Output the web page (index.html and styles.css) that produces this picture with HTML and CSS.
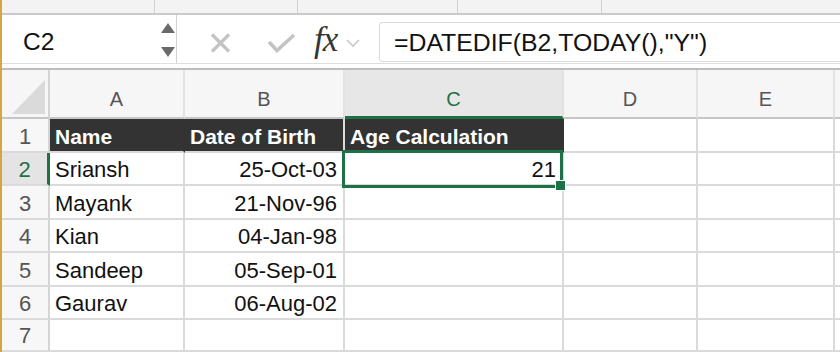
FILE: index.html
```html
<!DOCTYPE html>
<html>
  <head>
    <meta charset="utf-8">
    <title>Age Calculation</title>
    <link rel="stylesheet" href="styles.css">
  </head>
  <body>
    <div class="window">
      <div class="ribbon-edge">
        <span class="seg seg-1"></span>
        <span class="seg seg-2"></span>
        <span class="seg seg-3"></span>
        <span class="seg seg-4"></span>
      </div>

      <div class="formula-bar">
        <div class="name-box">
          <span class="ref">C2</span>
          <svg class="spinner" width="14" height="34" viewBox="0 0 14 34">
            <path d="M7 0 L14 10 L0 10 Z" fill="#6b6b6b"/>
            <path d="M0 24 L14 24 L7 34 Z" fill="#6b6b6b"/>
          </svg>
        </div>
        <div class="tools">
          <svg class="icon-cancel" width="23" height="20" viewBox="0 0 23 20">
            <path d="M3 1.5 L20 18.5 M20 1.5 L3 18.5" stroke="#c3c3c3" stroke-width="3.2" fill="none"/>
          </svg>
          <svg class="icon-enter" width="29" height="20" viewBox="0 0 29 20">
            <path d="M2 9 L10 17.5 L27 2" stroke="#c3c3c3" stroke-width="3.6" fill="none"/>
          </svg>
          <span class="fx">fx</span>
          <svg class="icon-more" width="14" height="8" viewBox="0 0 14 8">
            <path d="M1 1 L7 7 L13 1" stroke="#c6c6c6" stroke-width="1.6" fill="none"/>
          </svg>
        </div>
        <div class="formula-input">=DATEDIF(B2,TODAY(),"Y")</div>
      </div>
      <div class="bar-gap"></div>

      <div class="sheet">
        <div class="cell corner"><span class="corner-mark"></span></div>
        <div class="cell col-head">A</div>
        <div class="cell col-head">B</div>
        <div class="cell col-head active">C</div>
        <div class="cell col-head">D</div>
        <div class="cell col-head">E</div>
        <div class="cell col-head"></div>

        <div class="cell row-head">1</div>
        <div class="cell title">Name</div>
        <div class="cell title">Date of Birth</div>
        <div class="cell title">Age Calculation</div>
        <div class="cell"></div>
        <div class="cell"></div>
        <div class="cell"></div>

        <div class="cell row-head active">2</div>
        <div class="cell">Sriansh</div>
        <div class="cell num">25-Oct-03</div>
        <div class="cell num">21</div>
        <div class="cell"></div>
        <div class="cell"></div>
        <div class="cell"></div>

        <div class="cell row-head">3</div>
        <div class="cell">Mayank</div>
        <div class="cell num">21-Nov-96</div>
        <div class="cell"></div>
        <div class="cell"></div>
        <div class="cell"></div>
        <div class="cell"></div>

        <div class="cell row-head">4</div>
        <div class="cell">Kian</div>
        <div class="cell num">04-Jan-98</div>
        <div class="cell"></div>
        <div class="cell"></div>
        <div class="cell"></div>
        <div class="cell"></div>

        <div class="cell row-head">5</div>
        <div class="cell">Sandeep</div>
        <div class="cell num">05-Sep-01</div>
        <div class="cell"></div>
        <div class="cell"></div>
        <div class="cell"></div>
        <div class="cell"></div>

        <div class="cell row-head">6</div>
        <div class="cell">Gaurav</div>
        <div class="cell num">06-Aug-02</div>
        <div class="cell"></div>
        <div class="cell"></div>
        <div class="cell"></div>
        <div class="cell"></div>

        <div class="cell row-head">7</div>
        <div class="cell"></div>
        <div class="cell"></div>
        <div class="cell"></div>
        <div class="cell"></div>
        <div class="cell"></div>
        <div class="cell"></div>

        <div class="selection"><span class="fill-handle"></span></div>
      </div>
    </div>
  </body>
</html>
```

FILE: styles.css
```css
html, body {margin: 0; height: 100%;}
body {background: #fff; font-family: "Liberation Sans", Arial, sans-serif; color: #111; overflow: hidden;}

.window {display: flex; flex-direction: column; height: 352px; border-left: 2px solid #d5a63f;}

/* strip left over from the ribbon above */
.ribbon-edge {display: flex; height: 13px; background: #f3f3f3; border-bottom: 2px solid #cacaca;}
.ribbon-edge .seg {border-right: 1px solid #d2d2d2;}
.seg-1 {width: 152px;}
.seg-2 {width: 142px;}
.seg-3 {width: 159px;}
.seg-4 {width: 143px;}

/* formula bar */
.formula-bar {display: flex; height: 48px; background: #fff; border-bottom: 1px solid #dedede;}
.name-box {display: flex; align-items: center; justify-content: space-between; width: 175px; border-right: 1px solid #d0d0d0; padding: 6px 1px 0 21px; box-sizing: border-box; font-size: 24.5px;}
.name-box .spinner {margin-top: -4px;}
.tools {display: flex; align-items: center; padding-top: 8px; width: 202px;}
.icon-cancel {margin-left: 32px;}
.icon-enter {margin-left: 35px;}
.fx {margin-left: 18px; font-family: "Liberation Serif", "Times New Roman", serif; font-style: italic; font-size: 35px; color: #353535; line-height: 1; margin-top: -7px; letter-spacing: -1px;}
.icon-more {margin-left: 9px;}
.formula-input {flex: 1; display: flex; align-items: center; margin: 7px 0 1px 0; padding: 2px 0 0 14px; border: 1px solid #dcdcdc; border-right: none; border-radius: 4px 0 0 4px; font-size: 24.8px; white-space: nowrap;}
.bar-gap {height: 4px; border-bottom: 2px solid #bdbdbd;}

/* grid */
.sheet {position: relative; flex: 1; display: grid; grid-template-columns: 48px 135px 160px 219px 134px 137px 1fr; grid-template-rows: 49px 34px 33px 34px 33px 34px 33px 1fr;}
.cell {box-sizing: border-box; border-right: 2px solid #dadada; border-bottom: 2px solid #dadada; display: flex; align-items: flex-end; padding: 0 5px 2px 5px; font-size: 22px; line-height: 24px; white-space: nowrap;}
.cell.num {justify-content: flex-end; padding-right: 6px;}

.col-head {justify-content: center; background: #f6f6f6; color: #555; font-size: 20px; padding-bottom: 6px; border-right-color: #e2e2e2; border-bottom-color: #c6c6c6;}
.col-head.active {background: #e7e7e7; color: #1e7145; border-bottom: 3px solid #1e7145; padding-bottom: 5px;}

.corner {position: relative; background: #f6f6f6; border-right-color: #d4d4d4; border-bottom-color: #c6c6c6;}
.corner-mark {position: absolute; right: 3px; bottom: 3px; width: 33px; height: 34px; background: #dadada; clip-path: polygon(100% 0, 100% 100%, 0 100%);}

.row-head {justify-content: center; background: #f7f7f7; color: #555; padding: 0 0 2px 0; border-right-color: #d4d4d4;}
.row-head.active {background: #e4e4e4; color: #1e7145; border-right: 3px solid #1e7145;}

.title {background: #333; color: #fff; font-weight: bold; font-size: 21px; border-right-color: #333;}
.title:nth-child(10) {border-right-color: #dadada;}

/* active cell C2 */
.selection {position: absolute; left: 340px; top: 80px; width: 221px; height: 38px; box-sizing: border-box; border: 3px solid #1e7145; pointer-events: none;}
.fill-handle {position: absolute; right: -6px; bottom: -6px; width: 9px; height: 9px; background: #1e7145; border: 1px solid #fff;}
```
